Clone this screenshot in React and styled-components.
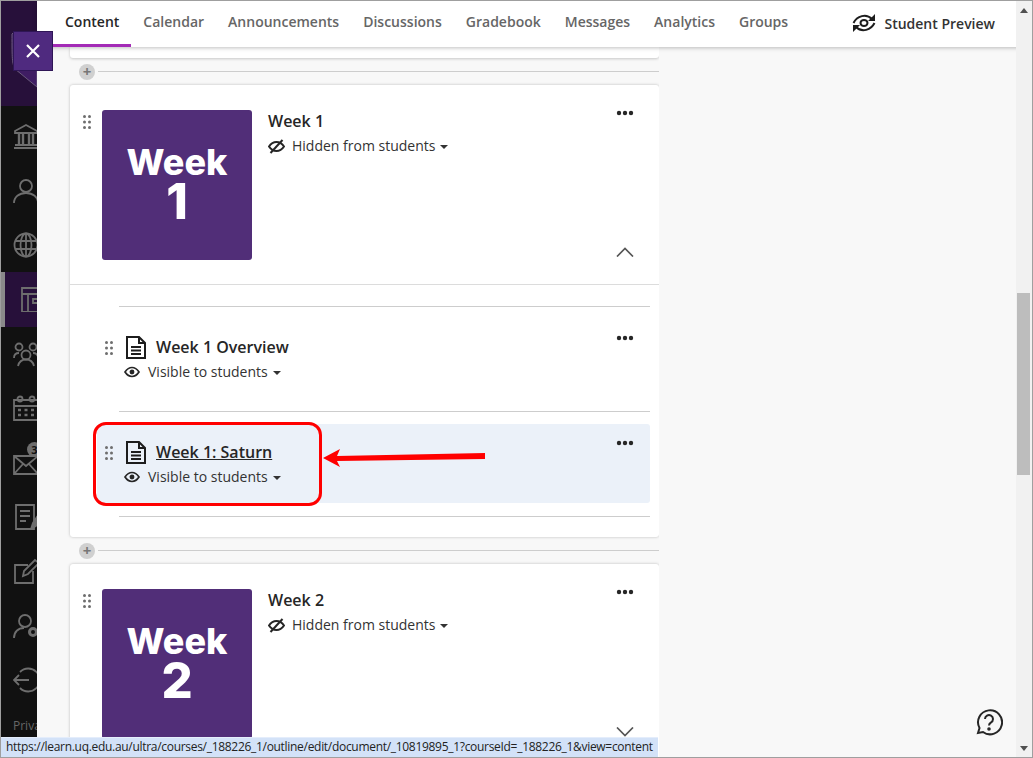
import React from 'react'
import styled, { createGlobalStyle } from 'styled-components'

const Global = createGlobalStyle`
html, body { margin: 0; padding: 0; height: 100%; overflow: hidden; }
body { font-family: "Open Sans", "Liberation Sans", sans-serif; color: #262626; }
* { box-sizing: border-box; }
`

const Win = styled.div`
position: relative;
display: flex;
width: 1033px;
height: 758px;
border: 1px solid #9f9f9f;
overflow: hidden;
`
const Sidebar = styled.div`
width: 36px;
flex: none;
background: #111;
overflow: hidden;
display: flex;
flex-direction: column;
`
const LogoArea = styled.div`
height: 105px;
flex: none;
background: #27103a;
margin-bottom: 3px;
padding: 30px 0 0 8px;
`
const NavRow = styled.div`
height: 54.4px;
flex: none;
display: flex;
align-items: center;
color: #6e6e6e;
position: relative;
background: ${p => p.$active ? '#27103a' : 'transparent'};
border-left: ${p => p.$active ? '4px solid #8a8a8a' : '0'};
padding-left: ${p => p.$active ? '15px' : '12px'};
svg { flex: none; }
`
const Badge = styled.span`
position: absolute;
left: 26px;
top: 7px;
width: 15px;
height: 15px;
border-radius: 50%;
background: #6e6e6e;
color: #111;
font-size: 11px;
font-weight: 700;
line-height: 15px;
text-align: center;
`
const Privacy = styled.div`
font-size: 12px;
color: #666;
padding: 10px 0 0 12px;
white-space: nowrap;
`
const Main = styled.div`
flex: 1;
min-width: 0;
background: #f8f8f8;
display: flex;
flex-direction: column;
position: relative;
`
const TopBar = styled.div`
height: 46px;
flex: none;
background: #fff;
box-shadow: 0 1px 4px rgba(0,0,0,.25);
display: flex;
align-items: stretch;
padding: 0 37px 0 15px;
position: relative;
z-index: 2;
`
const Tab = styled.div`
padding: 0 12px;
font-size: 14px;
font-weight: 600;
line-height: 42px;
height: 46px;
color: ${p => p.$active ? '#262626' : '#666'};
border-bottom: 3px solid ${p => p.$active ? '#a32bb6' : 'transparent'};
white-space: nowrap;
&:first-child { padding-left: 13px; }
`
const Preview = styled.div`
margin-left: auto;
display: flex;
align-items: center;
gap: 8px;
padding-bottom: 2px;
font-size: 14px;
font-weight: 600;
color: #333;
`
const Content = styled.div`
flex: 1;
overflow: hidden;
padding-left: 33px;
width: 622px;
`
const Stub = styled.div`
height: 11px;
background: #fff;
width: 589px;
box-shadow: 0 1px 3px rgba(0,0,0,.2);
border-radius: 0 0 3px 3px;
`
const Insert = styled.div`
height: 27px;
display: flex;
align-items: center;
padding-left: 9px;
gap: 3px;
width: 589px;
`
const PlusBall = styled.div`
width: 16px;
height: 16px;
border-radius: 50%;
background: #d0d0d0;
color: #777;
font-size: 15px;
font-weight: 700;
line-height: 15px;
text-align: center;
flex: none;
`
const InsertLine = styled.div`
flex: 1;
height: 1px;
background: #cdcdcd;
`
const Card = styled.div`
width: 589px;
flex: none;
background: #fff;
border-radius: 3px;
box-shadow: 0 0 3px rgba(0,0,0,.25);
`
const CardHead = styled.div`
display: flex;
padding: 25px 25px 24px 13px;
height: 200px;
border-bottom: ${p => p.$open ? '1px solid #dcdcdc' : '0'};
`
const Handle = styled.svg`
flex: none;
color: #6e6e6e;
margin-top: 5px;
`
const Thumb = styled.div`
width: 150px;
height: 150px;
flex: none;
margin-left: 11px;
background: #512e78;
border-radius: 3px;
color: #fff;
font-family: Inter, "Liberation Sans", sans-serif;
font-weight: 800;
text-align: center;
padding-top: 32px;
`
const ThumbWeek = styled.div`
font-size: 36px;
line-height: 40px;
`
const ThumbNum = styled.div`
font-size: 49px;
line-height: 40px;
`
const Details = styled.div`
flex: 1;
margin-left: 16px;
`
const CardTitle = styled.div`
font-size: 16px;
font-weight: 600;
line-height: 22px;
`
const Status = styled.div`
display: flex;
align-items: center;
font-size: 14px;
line-height: 20px;
color: #333;
margin-top: ${p => p.$top || 0};
svg.lead { margin-right: 8px; flex: none; }
`
const Caret = styled.span`
width: 0;
height: 0;
margin-left: 5px;
margin-top: 1px;
border-left: 4px solid transparent;
border-right: 4px solid transparent;
border-top: 4px solid #333;
`
const Side = styled.div`
display: flex;
flex-direction: column;
justify-content: space-between;
align-items: center;
width: 18px;
flex: none;
padding-bottom: 3px;
`
const List = styled.div`
padding: 21px 0 20px;
`
const Rule = styled.div`
height: 1px;
background: #cdcdcd;
margin: 0 9px 0 49px;
`
const Item = styled.div`
height: 79px;
margin: 12px 9px 13px 27px;
padding: 17px 16px 0 8px;
display: flex;
border-radius: 3px;
background: ${p => p.$highlight ? '#ebf1f9' : 'transparent'};
`
const ItemBody = styled.div`
flex: 1;
margin-left: 11px;
`
const ItemTitleRow = styled.div`
display: flex;
align-items: center;
height: 22px;
padding-left: 2px;
`
const ItemTitle = styled.div`
font-size: 16px;
font-weight: 600;
line-height: 22px;
margin-left: 10px;
text-decoration: ${p => p.$link ? 'underline' : 'none'};
`
const More = styled.svg`
flex: none;
color: #262626;
`
const ItemMore = styled(More)`
margin-top: -1px;
`
const Callout = styled.div`
position: absolute;
left: 92px;
top: 421px;
width: 229px;
height: 84px;
border: 3px solid #f00;
border-radius: 13px;
pointer-events: none;
z-index: 3;
`
const Arrow = styled.svg`
position: absolute;
left: 320px;
top: 444px;
z-index: 3;
`
const CloseBtn = styled.div`
position: absolute;
left: 12px;
top: 30px;
width: 40px;
height: 40px;
background: #4f2a7f;
border: 1px solid #2f1656;
display: flex;
align-items: center;
justify-content: center;
z-index: 4;
`
const Help = styled.svg`
position: absolute;
left: 974px;
top: 707px;
z-index: 3;
`
const Scrollbar = styled.div`
position: absolute;
right: 0;
top: 0;
bottom: 0;
width: 16px;
background: #f1f1f1;
z-index: 3;
`
const ScrollThumb = styled.div`
position: absolute;
left: 1px;
right: 2px;
top: 292px;
height: 182px;
background: #bdbdbd;
`
const ScrollArrow = styled.div`
position: absolute;
left: 4px;
width: 0;
height: 0;
border-left: 4px solid transparent;
border-right: 4px solid transparent;
${p => p.$up
    ? 'top: 7px; border-bottom: 5px solid #505050;'
    : 'bottom: 6px; border-top: 5px solid #505050;'}
`
const StatusBar = styled.div`
position: absolute;
left: 0;
bottom: 0;
height: 20px;
width: 657px;
background: #d3e2f8;
border-top: 1px solid #e4edfb;
font-family: "Open Sans", sans-serif;
font-size: 12px;
line-height: 18px;
letter-spacing: -0.3px;
padding-left: 5px;
color: #222;
white-space: nowrap;
z-index: 5;
`

const Dots = () => (
  <Handle width="8" height="14" viewBox="0 0 8 14" fill="currentColor">
    {[1.5, 7, 12.5].map(y => [1.5, 6.5].map(x => <circle key={x + '-' + y} cx={x} cy={y} r="1.5" />))}
  </Handle>
)

const MoreDots = ({ as: C = More }) => (
  <C width="18" height="6" viewBox="0 0 18 6" fill="currentColor">
    <circle cx="3" cy="3" r="2.2" /><circle cx="9" cy="3" r="2.2" /><circle cx="15" cy="3" r="2.2" />
  </C>
)

const DocIcon = () => (
  <svg width="20" height="23" viewBox="0 0 20 23" fill="none" stroke="#1d1d1d" strokeWidth="2" style={{ flex: 'none' }}>
    <path d="M1 1h12l6 6v15H1z" />
    <path d="M13 1v6h6" />
    <path d="M5 11h10M5 14.5h10M5 18h10" />
  </svg>
)

const EyeIcon = () => (
  <svg className="lead" width="16" height="12" viewBox="0 0 16 12" fill="none" stroke="#262626" strokeWidth="1.7">
    <path d="M1 6c2-3 4.4-4.500 7-4.500S13 3 15 6c-2 3-4.400 4.500-7 4.500S3 9 1 6z" />
    <circle cx="8" cy="6" r="1.6" fill="#262626" />
  </svg>
)

const EyeOffIcon = () => (
  <svg className="lead" width="17" height="15" viewBox="0 0 17 15" fill="none" stroke="#262626" strokeWidth="2" style={{ marginRight: 7 }}>
    <path d="M1 7.500c2-3 4.600-4.500 7.500-4.500s5.500 1.500 7.500 4.500c-2 3-4.600 4.500-7.500 4.500S3 10.500 1 7.500z" />
    <path d="M2.500 14L14.500 1" />
  </svg>
)

const Chevron = ({ up }) => (
  <svg width="18" height="10" viewBox="0 0 18 10" fill="none" stroke="#555" strokeWidth="1.7">
    <path d={up ? 'M1 9.500L9 1.500l8 8' : 'M1 .5l8 8 8-8'} />
  </svg>
)

const icons = [
  <g key="bank"><path d="M13 2L2 8v2h22V8zM2 22h22M1 25h24" /><path d="M6 11v10M10 11v10M16 11v10M20 11v10" strokeWidth="2.4" /></g>,
  <g key="user"><circle cx="13" cy="8" r="6" /><path d="M1 25c0-6 5-10 12-10s12 4 12 10" /></g>,
  <g key="globe"><circle cx="13" cy="13" r="11.5" /><ellipse cx="13" cy="13" rx="5.5" ry="11.5" /><path d="M13 1.500v23M2 9h22M2 17h22" /></g>,
  <g key="course"><path d="M2 2h24v24H2zM2 8h24M8 8v18" /><path d="M13 13h7v4h-7z" /></g>,
  <g key="groups"><circle cx="6" cy="6" r="3.5" /><circle cx="20" cy="6" r="3.5" /><circle cx="13" cy="14" r="4.5" /><path d="M1 17c0-3 2-5 5-5M25 17c0-3-2-5-5-5M5 25c1-4 4-6.500 8-6.500s7 2.500 8 6.500" /></g>,
  <g key="cal"><path d="M1 5h24v20H1zM1 11h24" /><circle cx="7" cy="4" r="2.5" /><circle cx="19" cy="4" r="2.5" /><path d="M5 15h3M11.500 15h3M18 15h3M5 20h3M11.500 20h3M18 20h3" strokeWidth="2.5" /></g>,
  <g key="mail"><path d="M1 5h24v18H1zM1 5l12 10L25 5M1 23l9-10M25 23l-9-10" transform="translate(0 1)" /></g>,
  <g key="grades"><path d="M3 1h18v24H3zM7 7h10M7 12h10M7 17h6" /><path d="M18 25l2-6 4-6 2 2-3 7z" fill="#6e6e6e" /></g>,
  <g key="edit"><path d="M20 13v12H2V7h13" /><path d="M10 18l1-5L22 2l4 3-11 11z" /></g>,
  <g key="usercog"><circle cx="12" cy="8" r="6" /><path d="M1 25c0-6 4-10 10-10" /><circle cx="20" cy="19" r="3.5" strokeWidth="3" /></g>,
  <g key="out"><path d="M7 5a11.500 11.500 0 1 1 0 16M1 13h15M6 8l-5 5 5 5" /></g>,
]

const tabs = ['Content', 'Calendar', 'Announcements', 'Discussions', 'Gradebook', 'Messages', 'Analytics', 'Groups']

function CourseItem({ title, link }) {
  return (
    <Item $highlight={link}>
      <Dots />
      <ItemBody>
        <ItemTitleRow>
          <DocIcon />
          <ItemTitle $link={link}>{title}</ItemTitle>
        </ItemTitleRow>
        <Status $top="4px"><EyeIcon />Visible to students<Caret /></Status>
      </ItemBody>
      <MoreDots as={ItemMore} />
    </Item>
  )
}

function WeekHead({ n, open }) {
  return (
    <CardHead $open={open}>
      <Dots />
      <Thumb>
        <ThumbWeek>Week</ThumbWeek>
        <ThumbNum>{n}</ThumbNum>
      </Thumb>
      <Details>
        <CardTitle>Week {n}</CardTitle>
        <Status $top="4px"><EyeOffIcon />Hidden from students<Caret /></Status>
      </Details>
      <Side>
        <MoreDots />
        <Chevron up={open} />
      </Side>
    </CardHead>
  )
}

export default function App() {
  return (
    <>
      <Global />
      <Win>
        <Sidebar>
          <LogoArea>
            <svg width="28" height="60" viewBox="0 0 28 60" fill="none">
              <path d="M5 1h23v55L6 38C3 32 3 28 3 3z" fill="#3f1d63" stroke="#6a5a7c" strokeWidth="1" />
            </svg>
          </LogoArea>
          {icons.map((ic, i) => (
            <NavRow key={i} $active={i === 3}>
              <svg width="26" height="26" viewBox="0 0 26 26" fill="none" stroke="currentColor" strokeWidth="1.8">{ic}</svg>
              {i === 6 && <Badge>3</Badge>}
            </NavRow>
          ))}
          <Privacy>Privacy</Privacy>
        </Sidebar>
        <Main>
          <TopBar>
            {tabs.map((t, i) => <Tab key={t} $active={i === 0}>{t}</Tab>)}
            <Preview>
              <svg width="24" height="20" viewBox="0 0 24 20" fill="none" stroke="#1d1d1d" strokeWidth="2">
                <path d="M1.500 10C5 3 14 0 20 6" />
                <path d="M22.500 10C19 17 10 20 4 14" />
                <path d="M23 1v7h-7M1 19v-7h7" fill="#1d1d1d" stroke="none" />
                <ellipse cx="12" cy="10" rx="3.5" ry="3" />
              </svg>
              Student Preview
            </Preview>
          </TopBar>
          <Content>
            <Stub />
            <Insert><PlusBall>+</PlusBall><InsertLine /></Insert>
            <Card>
              <WeekHead n={1} open />
              <List>
                <Rule />
                <CourseItem title="Week 1 Overview" />
                <Rule />
                <CourseItem title="Week 1: Saturn" link />
                <Rule />
              </List>
            </Card>
            <Insert><PlusBall>+</PlusBall><InsertLine /></Insert>
            <Card>
              <WeekHead n={2} />
            </Card>
          </Content>
        </Main>
        <Scrollbar>
          <ScrollArrow $up />
          <ScrollThumb />
          <ScrollArrow />
        </Scrollbar>
        <CloseBtn>
          <svg width="16" height="16" viewBox="0 0 16 16" stroke="#fff" strokeWidth="2.2"><path d="M2 2l12 12M14 2L2 14" /></svg>
        </CloseBtn>
        <Callout />
        <Arrow width="166" height="24" viewBox="0 0 166 24" fill="#f00">
          <path d="M2 13L19 4l-3 7 148-3v6L16 16l3 6z" />
        </Arrow>
        <Help width="28" height="28" viewBox="0 0 28 28" fill="none" stroke="#262626" strokeWidth="2">
          <path d="M3 25l1.500-5A12 12 0 1 1 8 24z" />
          <path d="M10 11a4 4 0 1 1 6 3.500c-1.500.8-2 1.500-2 3" />
          <circle cx="14" cy="21" r=".8" fill="#262626" />
        </Help>
        <StatusBar>https://learn.uq.edu.au/ultra/courses/_188226_1/outline/edit/document/_10819895_1?courseId=_188226_1&view=content</StatusBar>
      </Win>
    </>
  )
}
